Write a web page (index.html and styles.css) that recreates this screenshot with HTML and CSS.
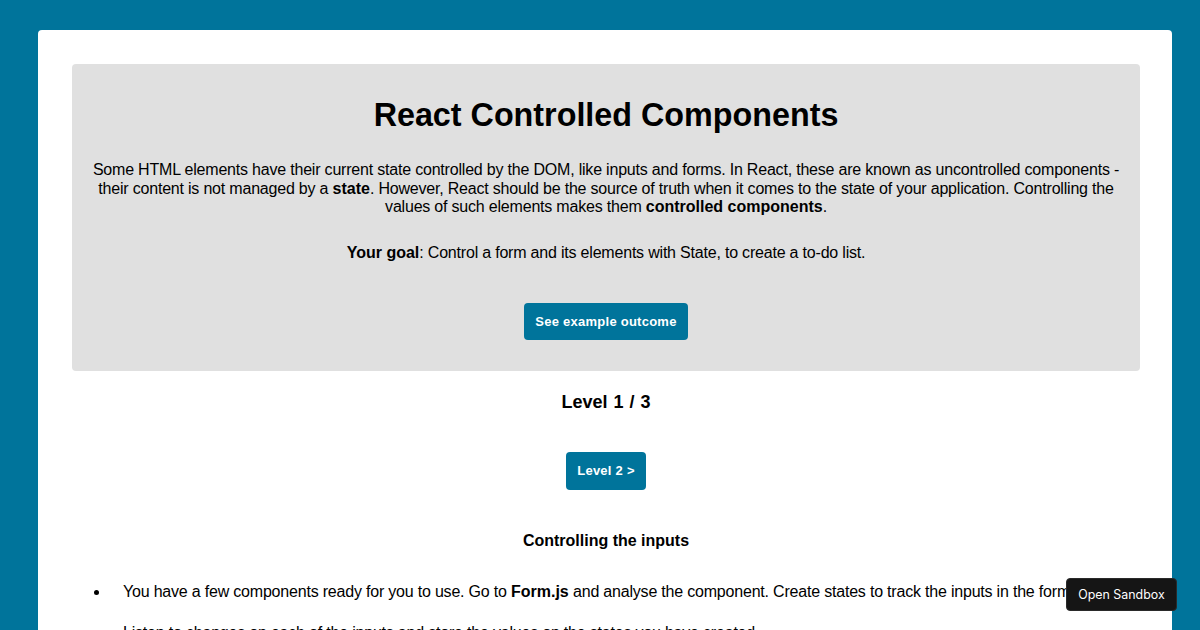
FILE: index.html
```html
<!DOCTYPE html>
<html lang="en">
<head>
<meta charset="utf-8">
<title>React Controlled Components</title>
<link rel="stylesheet" href="styles.css">
</head>
<body>
<main class="card">
  <section class="intro">
    <h1 class="title">React Controlled Components</h1>
    <p class="lead">Some HTML elements have their current state controlled by the DOM, like inputs and forms. In React, these are known as uncontrolled components - their content is not managed by a <b>state</b>. However, React should be the source of truth when it comes to the state of your application. Controlling the values of such elements makes them <b>controlled components</b>.</p>
    <p class="goal"><b>Your goal</b>: Control a form and its elements with State, to create a to-do list.</p>
    <button class="btn btn-outcome">See example outcome</button>
  </section>
  <h2 class="level">Level 1 / 3</h2>
  <button class="btn btn-level">Level 2 &gt;</button>
  <h3 class="section-title">Controlling the inputs</h3>
  <ul class="steps">
    <li>You have a few components ready for you to use. Go to <b>Form.js</b> and analyse the component. Create states to track the inputs in the form.</li>
    <li>Listen to changes on each of the inputs and store the values on the states you have created.</li>
  </ul>
</main>
<button class="sandbox">Open Sandbox</button>
</body>
</html>
```
FILE: styles.css
```css
html, body {
  margin: 0;
  padding: 0;
}
body {
  background: #00749b;
  padding: 30px 28px 0 38px;
  font-family: "Liberation Sans", Arial, sans-serif;
  color: #000;
  height: 630px;
  box-sizing: border-box;
  overflow: hidden;
}
.card {
  background: #fff;
  border-radius: 4px 4px 0 0;
  padding: 34px 32px 40px 34px;
  display: flex;
  flex-direction: column;
  align-items: center;
  min-height: 700px;
  box-sizing: border-box;
}
.intro {
  align-self: stretch;
  background: #e0e0e0;
  border-radius: 4px;
  padding: 32px 14px 31px;
  display: flex;
  flex-direction: column;
  align-items: center;
  text-align: center;
}
.title {
  font-size: 32.3px;
  font-weight: bold;
  margin: 0 0 27px;
  line-height: 38px;
}
.lead {
  font-size: 16px;
  line-height: 18.5px;
  letter-spacing: -0.2px;
  margin: 0 0 27px;
}
.goal {
  font-size: 16px;
  line-height: 18px;
  letter-spacing: -0.2px;
  margin: 0 0 41px;
}
.lead b, .goal b, .steps b {
  letter-spacing: 0;
}
.btn {
  background: #00749b;
  color: #fff;
  border: none;
  border-radius: 4px;
  font-family: "Liberation Sans", Arial, sans-serif;
  font-weight: bold;
  font-size: 13px;
  letter-spacing: 0.25px;
  cursor: pointer;
}
.btn-outcome {
  width: 164px;
  height: 37px;
  padding: 0;
}
.level {
  font-size: 18px;
  font-weight: bold;
  margin: 20px 0 0;
  line-height: 22px;
  word-spacing: 1px;
}
.btn-level {
  width: 80px;
  height: 38px;
  padding: 0;
  margin-top: 39px;
}
.section-title {
  font-size: 16px;
  font-weight: bold;
  margin: 42px 0 0;
  line-height: 18px;
}
.steps {
  align-self: stretch;
  margin: 33px 0 0;
  padding-left: 38px;
  font-size: 16px;
  line-height: 18px;
  letter-spacing: -0.2px;
}
.steps li {
  padding-left: 13px;
  margin-bottom: 23px;
}
.sandbox {
  position: fixed;
  right: 23px;
  bottom: 19px;
  width: 111px;
  height: 33px;
  background: #151515;
  color: #fff;
  border: 1px solid #2a2a2a;
  border-radius: 4px;
  font-family: Inter, "Liberation Sans", sans-serif;
  font-size: 12.4px;
  padding: 0;
}
```
